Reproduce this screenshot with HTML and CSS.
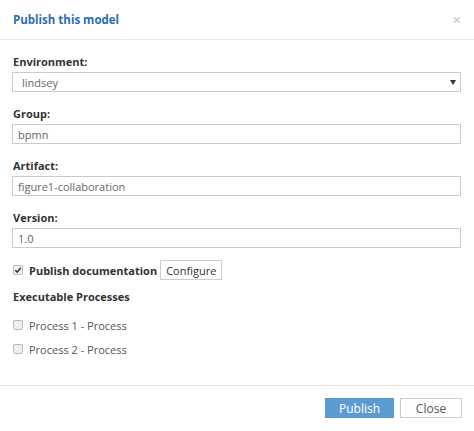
FILE: index.html
```html
<!DOCTYPE html>
<html>
<head>
<meta charset="utf-8">
<link rel="stylesheet" href="styles.css">
</head>
<body>
<div class="modal">
  <div class="modal-header">
    <h3 class="title">Publish this model</h3>
    <span class="close">×</span>
  </div>
  <div class="modal-body">
    <div class="field">
      <label class="label">Environment:</label>
      <div class="select"><span>lindsey</span><span class="caret"></span></div>
    </div>
    <div class="field">
      <label class="label">Group:</label>
      <div class="input">bpmn</div>
    </div>
    <div class="field">
      <label class="label">Artifact:</label>
      <div class="input">figure1-collaboration</div>
    </div>
    <div class="field">
      <label class="label">Version:</label>
      <div class="input">1.0</div>
    </div>
    <div class="doc-row">
      <span class="check checked"><svg viewBox="0 0 10 10" width="8" height="8"><path d="M1.5 5.2 L4 7.6 L8.6 2.2" fill="none" stroke="#333" stroke-width="1.8"/></svg></span>
      <span class="doc-label">Publish documentation</span>
      <span class="btn-small">Configure</span>
    </div>
    <div class="section-title">Executable Processes</div>
    <div class="proc-row"><span class="check"></span><span class="proc-label">Process 1 - Process</span></div>
    <div class="proc-row"><span class="check"></span><span class="proc-label">Process 2 - Process</span></div>
  </div>
  <div class="modal-footer">
    <span class="btn btn-primary">Publish</span>
    <span class="btn btn-default">Close</span>
  </div>
</div>
</body>
</html>
```
FILE: styles.css
```css
html, body {
  margin: 0;
  padding: 0;
  background: #fff;
}
body {
  font-family: "Open Sans", "Liberation Sans", sans-serif;
  font-size: 11px;
  color: #333;
}
.modal {
  width: 474px;
  height: 431px;
  display: flex;
  flex-direction: column;
  box-sizing: border-box;
}
.modal-header {
  height: 40px;
  flex: none;
  box-sizing: border-box;
  border-bottom: 1px solid #e5e5e5;
  display: flex;
  align-items: center;
  justify-content: space-between;
  padding: 0 13px 0 13px;
}
.title {
  margin: 0;
  font-size: 11.5px;
  font-weight: 700;
  color: #2d6cb3;
}
.close {
  font-size: 15px;
  color: #c8c8c8;
  font-weight: 600;
  line-height: 1;
}
.modal-body {
  flex: 1;
  padding: 11px 13px 0 12px;
}
.field {
  display: flex;
  flex-direction: column;
  margin-bottom: 11px;
}
.field:nth-child(4) {
  margin-bottom: 0;
}
.label {
  font-weight: 700;
  line-height: 21px;
  height: 21px;
  padding-left: 1px;
}
.select, .input {
  height: 20px;
  box-sizing: border-box;
  border: 1px solid #ccc;
  display: flex;
  align-items: center;
  padding: 0 5px;
  color: #666;
  font-size: 11px;
}
.select {
  justify-content: space-between;
  padding-left: 9px;
}
.caret {
  width: 0;
  height: 0;
  border-left: 3px solid transparent;
  border-right: 3px solid transparent;
  border-top: 5px solid #333;
  margin-right: -1px;
}
.doc-row {
  display: flex;
  align-items: center;
  height: 20px;
  margin-top: 12px;
  padding-left: 1px;
}
.check {
  width: 10px;
  height: 10px;
  box-sizing: border-box;
  border: 1px solid #bbb;
  border-radius: 2px;
  background: #eee;
  display: flex;
  align-items: center;
  justify-content: center;
  margin-right: 6px;
}
.check.checked {
  background: #f4f4f4;
}
.doc-label {
  font-weight: 700;
  margin-right: 3px;
}
.btn-small {
  border: 1px solid #ccc;
  height: 20px;
  box-sizing: border-box;
  padding: 0 5px;
  display: flex;
  align-items: center;
  color: #333;
}
.section-title {
  font-weight: 700;
  margin-top: 7px;
  line-height: 20px;
  padding-left: 1px;
}
.proc-row {
  display: flex;
  align-items: center;
  margin-top: 10px;
  height: 16px;
  padding-left: 1px;
}
.proc-row + .proc-row {
  margin-top: 8px;
}
.proc-label {
  color: #555;
}
.modal-footer {
  border-top: 1px solid #e5e5e5;
  height: 46px;
  flex: none;
  box-sizing: border-box;
  display: flex;
  justify-content: flex-end;
  align-items: flex-start;
  padding: 12px 12px 0 0;
  gap: 6px;
}
.btn {
  height: 20px;
  box-sizing: border-box;
  display: flex;
  align-items: center;
  justify-content: center;
  font-size: 12px;
}
.btn-primary {
  width: 69px;
  background: #5b9bd1;
  color: #fff;
  border: 1px solid #5b9bd1;
}
.btn-default {
  width: 62px;
  background: #fff;
  color: #555;
  border: 1px solid #ccc;
}
```
